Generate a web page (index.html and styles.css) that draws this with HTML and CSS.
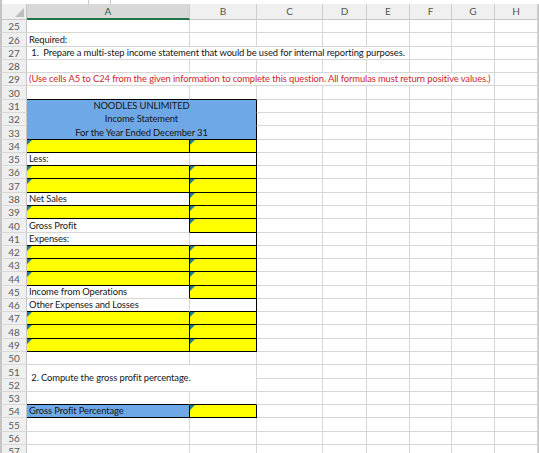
FILE: index.html
```html
<!DOCTYPE html>
<html>
<head>
<meta charset="utf-8">
<link rel="stylesheet" href="styles.css">
</head>
<body>
<div class="topbar"><span class="tb-a"></span><span class="tb-b"></span></div>
<div class="sheet">
  <div class="corner"></div>
  <div class="ch sel">A</div><div class="ch">B</div><div class="ch">C</div><div class="ch">D</div><div class="ch">E</div><div class="ch">F</div><div class="ch">G</div><div class="ch">H</div>

  <div class="rh">25</div><div class="c"></div><div class="c"></div><div class="c"></div><div class="c"></div><div class="c"></div><div class="c"></div><div class="c"></div><div class="c"></div>
  <div class="rh">26</div><div class="c">Required:</div><div class="c"></div><div class="c"></div><div class="c"></div><div class="c"></div><div class="c"></div><div class="c"></div><div class="c"></div>
  <div class="rh">27</div><div class="c span5 pre"> 1.  Prepare a multi-step income statement that would be used for internal reporting purposes.</div><div class="c"></div><div class="c"></div><div class="c"></div>
  <div class="rh">28</div><div class="c"></div><div class="c"></div><div class="c"></div><div class="c"></div><div class="c"></div><div class="c"></div><div class="c"></div><div class="c"></div>
  <div class="rh">29</div><div class="c span7 red">(Use cells A5 to C24 from the given information to complete this question. All formulas must return positive values.)</div><div class="c"></div>
  <div class="rh">30</div><div class="c bB"></div><div class="c bB"></div><div class="c"></div><div class="c"></div><div class="c"></div><div class="c"></div><div class="c"></div><div class="c"></div>
  <div class="rh">31</div><div class="c title nb">NOODLES UNLIMITED</div><div class="c"></div><div class="c"></div><div class="c"></div><div class="c"></div><div class="c"></div><div class="c"></div>
  <div class="rh">32</div><div class="c title nb">Income Statement</div><div class="c"></div><div class="c"></div><div class="c"></div><div class="c"></div><div class="c"></div><div class="c"></div>
  <div class="rh">33</div><div class="c title">For the Year Ended December 31</div><div class="c"></div><div class="c"></div><div class="c"></div><div class="c"></div><div class="c"></div><div class="c"></div>
  <div class="rh">34</div><div class="c y"></div><div class="c y"></div><div class="c"></div><div class="c"></div><div class="c"></div><div class="c"></div><div class="c"></div><div class="c"></div>
  <div class="rh">35</div><div class="c bB">Less:</div><div class="c bR bB"></div><div class="c"></div><div class="c"></div><div class="c"></div><div class="c"></div><div class="c"></div><div class="c"></div>
  <div class="rh">36</div><div class="c y"></div><div class="c y"></div><div class="c"></div><div class="c"></div><div class="c"></div><div class="c"></div><div class="c"></div><div class="c"></div>
  <div class="rh">37</div><div class="c y"></div><div class="c y"></div><div class="c"></div><div class="c"></div><div class="c"></div><div class="c"></div><div class="c"></div><div class="c"></div>
  <div class="rh">38</div><div class="c bR bB">Net Sales</div><div class="c y"></div><div class="c"></div><div class="c"></div><div class="c"></div><div class="c"></div><div class="c"></div><div class="c"></div>
  <div class="rh">39</div><div class="c y"></div><div class="c y"></div><div class="c"></div><div class="c"></div><div class="c"></div><div class="c"></div><div class="c"></div><div class="c"></div>
  <div class="rh">40</div><div class="c bR">Gross Profit</div><div class="c y"></div><div class="c"></div><div class="c"></div><div class="c"></div><div class="c"></div><div class="c"></div><div class="c"></div>
  <div class="rh">41</div><div class="c bB">Expenses:</div><div class="c bR bB"></div><div class="c"></div><div class="c"></div><div class="c"></div><div class="c"></div><div class="c"></div><div class="c"></div>
  <div class="rh">42</div><div class="c y"></div><div class="c y"></div><div class="c"></div><div class="c"></div><div class="c"></div><div class="c"></div><div class="c"></div><div class="c"></div>
  <div class="rh">43</div><div class="c y"></div><div class="c y"></div><div class="c"></div><div class="c"></div><div class="c"></div><div class="c"></div><div class="c"></div><div class="c"></div>
  <div class="rh">44</div><div class="c y"></div><div class="c y"></div><div class="c"></div><div class="c"></div><div class="c"></div><div class="c"></div><div class="c"></div><div class="c"></div>
  <div class="rh">45</div><div class="c bR">Income from Operations</div><div class="c y"></div><div class="c"></div><div class="c"></div><div class="c"></div><div class="c"></div><div class="c"></div><div class="c"></div>
  <div class="rh">46</div><div class="c bB">Other Expenses and Losses</div><div class="c bR bB"></div><div class="c"></div><div class="c"></div><div class="c"></div><div class="c"></div><div class="c"></div><div class="c"></div>
  <div class="rh">47</div><div class="c y"></div><div class="c y"></div><div class="c"></div><div class="c"></div><div class="c"></div><div class="c"></div><div class="c"></div><div class="c"></div>
  <div class="rh">48</div><div class="c y"></div><div class="c y"></div><div class="c"></div><div class="c"></div><div class="c"></div><div class="c"></div><div class="c"></div><div class="c"></div>
  <div class="rh">49</div><div class="c y"></div><div class="c y"></div><div class="c"></div><div class="c"></div><div class="c"></div><div class="c"></div><div class="c"></div><div class="c"></div>
  <div class="rh">50</div><div class="c"></div><div class="c"></div><div class="c"></div><div class="c"></div><div class="c"></div><div class="c"></div><div class="c"></div><div class="c"></div>
  <div class="rh">51</div><div class="c merge2 pre"> 2. Compute the gross profit percentage.</div><div class="c"></div><div class="c"></div><div class="c"></div><div class="c"></div><div class="c"></div><div class="c"></div>
  <div class="rh">52</div><div class="c"></div><div class="c"></div><div class="c"></div><div class="c"></div><div class="c"></div><div class="c"></div>
  <div class="rh">53</div><div class="c bB"></div><div class="c bB"></div><div class="c"></div><div class="c"></div><div class="c"></div><div class="c"></div><div class="c"></div><div class="c"></div>
  <div class="rh">54</div><div class="c blue bR bB">Gross Profit Percentage</div><div class="c y"></div><div class="c"></div><div class="c"></div><div class="c"></div><div class="c"></div><div class="c"></div><div class="c"></div>
  <div class="rh">55</div><div class="c"></div><div class="c"></div><div class="c"></div><div class="c"></div><div class="c"></div><div class="c"></div><div class="c"></div><div class="c"></div>
  <div class="rh">56</div><div class="c"></div><div class="c"></div><div class="c"></div><div class="c"></div><div class="c"></div><div class="c"></div><div class="c"></div><div class="c"></div>
  <div class="rh">57</div><div class="c"></div><div class="c"></div><div class="c"></div><div class="c"></div><div class="c"></div><div class="c"></div><div class="c"></div><div class="c"></div>
</div>
</body>
</html>
```
FILE: styles.css
```css
* { box-sizing: border-box; margin: 0; padding: 0; }
html, body { background: #fff; }
body {
  margin: 0;
  width: 539px;
  height: 453px;
  overflow: hidden;
  font-family: Lato, "Open Sans", sans-serif;
}
.topbar {
  height: 4px;
  background: #fff;
  border-left: 2px solid #c4c4c4;
  position: relative;
}
.tb-a, .tb-b {
  position: absolute;
  top: 0;
  height: 4px;
  border-left: 1px solid #c8c8c8;
}
.tb-a { left: 86px; }
.tb-b { left: 108px; }
.sheet {
  display: grid;
  grid-template-columns: 27px 163px 67px 66px 44px 43px 42px 43px 43px;
  grid-template-rows: 16px;
  grid-auto-rows: 13.29px;
  border-right: 1px solid #c8c8c8;
  width: 539px;
}
.corner {
  background: #efefef;
  border-left: 2px solid #c4c4c4;
  border-right: 1px solid #c6c6c6;
  border-bottom: 1px solid #c6c6c6;
  position: relative;
}
.corner::after {
  content: "";
  position: absolute;
  right: 2px;
  bottom: 2px;
  border-bottom: 9px solid #bdbdbd;
  border-left: 9px solid transparent;
}
.ch {
  background: #f0f0f0;
  border-right: 1px solid #cdcdcd;
  border-bottom: 1px solid #c6c6c6;
  color: #555;
  font-size: 10px;
  text-align: center;
  line-height: 15px;
}
.ch.sel {
  background: #d8d8d8;
  color: #2f5e3f;
  border-bottom: 2px solid #217346;
}
.rh {
  background: #efefef;
  border-left: 2px solid #c4c4c4;
  border-right: 1px solid #c6c6c6;
  border-bottom: 1px solid #d8d8d8;
  color: #5a5a5a;
  font-size: 10px;
  text-align: center;
  display: flex;
  align-items: flex-end;
  justify-content: center;
  line-height: 12px;
}
.c {
  border-right: 1px solid #d6d6d6;
  border-bottom: 1px solid #d6d6d6;
  font-size: 9.4px;
  letter-spacing: -0.1px;
  line-height: 12px;
  color: #161616;
  padding-left: 2px;
  white-space: nowrap;
  overflow: hidden;
  display: flex;
  align-items: flex-end;
  min-width: 0;
}
.pre { white-space: pre; }
.span5 { grid-column: span 5; }
.span7 { grid-column: span 7; }
.red { color: #cc1f2e; }
.bB { border-bottom-color: #000; }
.bR { border-right-color: #000; }
.title {
  grid-column: span 2;
  background: #6fa8e6;
  border-right-color: #000;
  border-bottom-color: #000;
  justify-content: center;
  padding-left: 0;
}
.title.nb { border-bottom-color: transparent; }
.merge2 {
  grid-column: span 2;
  grid-row: span 2;
  align-items: center;
}
.blue { background: #6fa8e6; }
.y {
  background: #ffff00;
  border-right-color: #000;
  border-bottom-color: #000;
  position: relative;
}
.y::before {
  content: "";
  position: absolute;
  top: 0;
  left: 0;
  border-top: 5px solid #1a7f8e;
  border-right: 5px solid transparent;
}
```
